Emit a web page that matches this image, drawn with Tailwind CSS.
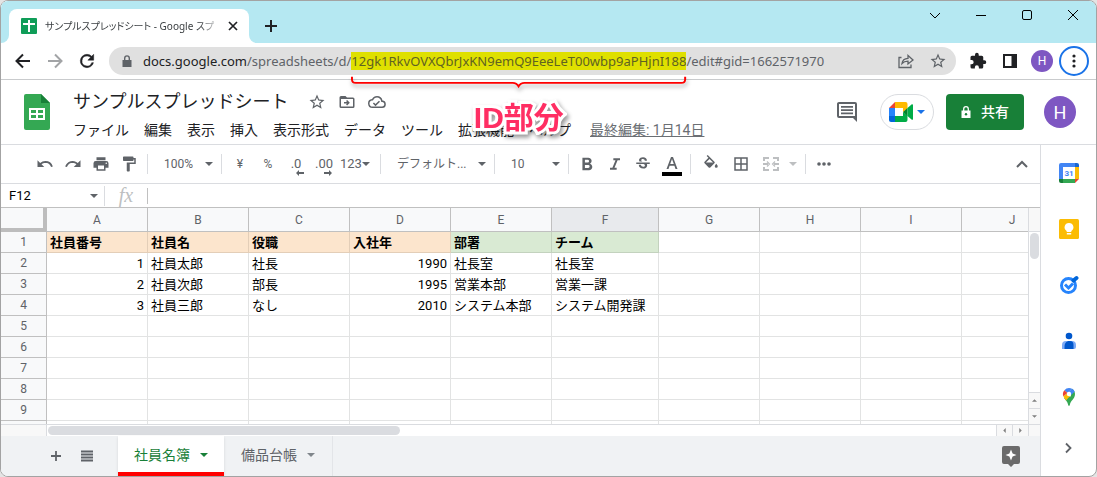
<!DOCTYPE html>
<html lang="ja">
<head>
    <meta charset="UTF-8">
    <meta name="viewport" content="width=device-width, initial-scale=1.0">
    <title>サンプルスプレッドシート - Google スプレッドシート</title>
    <script src="https://cdn.jsdelivr.net/npm/@tailwindcss/browser@4"></script>
</head>
<body class="bg-[#e4e4e4] font-['Roboto','Noto_Sans_CJK_JP',sans-serif] text-[#202124]">
    <div class="flex h-screen flex-col overflow-hidden rounded-lg border border-[#a3a3a3] bg-white">

        <!-- タブバー -->
        <div class="flex h-[42px] shrink-0 items-start bg-[#b5e8f2]">
            <div class="flex h-full w-2 shrink-0 items-end bg-white"><span class="h-full w-full rounded-br-lg bg-[#b5e8f2]"></span></div>
            <div class="flex h-full shrink-0 items-end">
                <div class="flex h-[34px] w-60 items-center rounded-t-lg bg-white pl-3 pr-2">
                    <svg class="size-4 shrink-0" viewBox="0 0 16 16"><rect width="16" height="16" rx="1" fill="#0f9d58"/><path d="M2 5h12v2H9v7H7V7H2zM7 2h2v3H7z" fill="#fff"/></svg>
                    <span class="ml-2 w-[176px] overflow-hidden whitespace-nowrap font-['Noto_Sans','Noto_Sans_CJK_JP',sans-serif] text-[10px] leading-5 text-[#3c4043] [font-feature-settings:'palt'] [mask-image:linear-gradient(to_right,black_88%,transparent)]">サンプルスプレッドシート - Google スプ</span>
                    <button class="ml-1 flex size-4 items-center justify-center" aria-label="タブを閉じる"><svg class="size-2.5" viewBox="0 0 10 10" fill="none" stroke="#202124" stroke-width="1.7"><path d="M1 1l8 8M9 1l-8 8"/></svg></button>
                </div>
            </div>
            <div class="h-full w-2 shrink-0 bg-white"><div class="h-full w-full rounded-bl-lg bg-[#b5e8f2]"></div></div>
            <button class="ml-1 mt-[15px] flex size-5 items-center justify-center" aria-label="新しいタブ"><svg class="size-3" viewBox="0 0 12 12" fill="none" stroke="#202124" stroke-width="2"><path d="M6 0v12M0 6h12"/></svg></button>
            <div class="ml-auto flex h-7">
                <button class="flex w-[46px] items-center justify-center" aria-label="タブを検索"><svg class="size-3" viewBox="0 0 12 12" fill="none" stroke="#000"><path d="M1 4l5 5 5-5"/></svg></button>
                <button class="flex w-[46px] items-center justify-center" aria-label="最小化"><svg class="size-3" viewBox="0 0 12 12" fill="none" stroke="#000"><path d="M1 6.500h10"/></svg></button>
                <button class="flex w-[46px] items-center justify-center" aria-label="最大化"><svg class="size-3" viewBox="0 0 12 12" fill="none" stroke="#000"><rect x="1.500" y="1.500" width="9" height="9" rx="1.500"/></svg></button>
                <button class="flex w-[46px] items-center justify-center" aria-label="閉じる"><svg class="size-3" viewBox="0 0 12 12" fill="none" stroke="#000"><path d="M1 1l10 10M11 1L1 11"/></svg></button>
            </div>
        </div>

        <!-- アドレスバー -->
        <div class="flex h-[37px] shrink-0 items-center border-b border-[#c9cbcd] px-1.5">
            <button class="flex w-8 justify-center" aria-label="戻る"><svg class="size-4" viewBox="0 0 16 16" fill="none" stroke="#202124" stroke-width="2"><path d="M15 8H2M8 1.500L1.500 8 8 14.500"/></svg></button>
            <button class="flex w-8 justify-center" aria-label="進む"><svg class="size-4" viewBox="0 0 16 16" fill="none" stroke="#a2a4a6" stroke-width="2"><path d="M1 8h13M8 1.500L14.500 8 8 14.500"/></svg></button>
            <button class="flex w-8 justify-center" aria-label="再読み込み"><svg class="size-5" viewBox="0 0 24 24" fill="#202124" stroke="#202124" stroke-width=".6"><path d="M17.650 6.350A7.960 7.960 0 0 0 12 4a8 8 0 1 0 7.730 10h-2.080A6 6 0 1 1 12 6c1.660 0 3.140.69 4.220 1.780L13 11h7V4z"/></svg></button>
            <div class="ml-1.5 flex h-7 min-w-0 flex-1 items-center rounded-full bg-[#e0e0e0] pl-3 pr-2">
                <svg class="size-3 shrink-0" viewBox="0 0 12 12"><path d="M1.500 5h9v7h-9z" fill="#5f6368"/><path d="M3.700 5V3.200a2.300 2.300 0 0 1 4.600 0V5" fill="none" stroke="#5f6368" stroke-width="1.400"/></svg>
                <div class="ml-2.5 flex-1 whitespace-nowrap font-['Noto_Sans',sans-serif] text-[13px] leading-[18px] text-[#5f6368]"><span class="text-[#202124]">docs.google.com</span>/spreadsheets/d/<mark class="relative inline-block bg-[#dfe000] text-[#5f6322]">12gk1RkvOVXQbrJxKN9emQ9EeeLeT00wbp9aPHjnI188<span class="absolute inset-x-0 top-6 z-10 flex flex-col items-center gap-3">
                            <svg class="h-3 w-full overflow-visible drop-shadow-[1px_3px_2px_rgba(0,0,0,0.35)]" viewBox="0 0 342 14" preserveAspectRatio="none" fill="none" stroke="#ff0000" stroke-width="2"><path d="M1 1v3q0 4 4 4h160q4 0 6 4 2-4 6-4h160q4 0 4-4V1"/></svg>
                            <span class="font-['Liberation_Sans','Noto_Sans_CJK_JP',sans-serif] text-[30px] font-bold leading-9 text-[#ff2e63] [paint-order:stroke_fill] [-webkit-text-stroke:6px_white] drop-shadow-[2px_3px_2px_rgba(0,0,0,0.4)]">ID部分</span>
                        </span></mark>/edit#gid=1662571970</div>
                <button class="flex w-8 justify-center" aria-label="共有"><svg class="size-4" viewBox="0 0 16 16" fill="none" stroke="#5f6368" stroke-width="1.300"><path d="M3.500 4.500H1v10h12v-3"/><path d="M4 10.500c.4-3.500 2.500-5 6-5.200V2.500L15 7l-5 4V8.200c-2.800 0-4.500.6-6 2.300z"/></svg></button>
                <button class="-mr-1.5 flex w-8 justify-center" aria-label="ブックマーク"><svg class="size-[18px]" viewBox="0 0 24 24" fill="#5f6368"><path d="M22 9.240l-7.190-.62L12 2 9.190 8.630 2 9.240l5.460 4.730L5.820 21 12 17.270 18.180 21l-1.630-7.030zM12 15.400l-3.760 2.270 1-4.280-3.320-2.880 4.380-.38L12 6.100l1.710 4.040 4.380.38-3.320 2.880 1 4.280z"/></svg></button>
            </div>
            <div class="ml-1.5 flex items-center">
                <button class="flex w-8 justify-center" aria-label="拡張機能"><svg class="size-[18px]" viewBox="0 0 24 24" fill="#202124"><path d="M20.500 11H19V7a2 2 0 0 0-2-2h-4V3.500a2.500 2.500 0 0 0-5 0V5H4a2 2 0 0 0-2 2v3.800h1.500a2.700 2.700 0 0 1 0 5.400H2V20a2 2 0 0 0 2 2h3.800v-1.500a2.700 2.700 0 0 1 5.400 0V22H17a2 2 0 0 0 2-2v-4h1.500a2.500 2.500 0 0 0 0-5z"/></svg></button>
                <button class="flex w-8 justify-center" aria-label="サイドパネル"><svg class="size-3.5" viewBox="0 0 14 14"><path d="M1 1h12v12H1z" fill="#fff" stroke="#202124" stroke-width="2"/><path d="M8.500 1H13v12H8.500z" fill="#202124"/></svg></button>
                <button class="flex w-8 justify-center" aria-label="プロフィール"><span class="flex size-[22px] items-center justify-center rounded-full bg-[#7e57c2] text-[12px] text-white">H</span></button>
                <button class="flex w-8 justify-center" aria-label="メニュー"><span class="flex size-[30px] items-center justify-center rounded-full border-2 border-[#1a73e8]"><svg class="h-4 w-1" viewBox="0 0 4 16" fill="#202124"><circle cx="2" cy="3" r="1.600"/><circle cx="2" cy="8" r="1.600"/><circle cx="2" cy="13" r="1.600"/></svg></span></button>
            </div>
        </div>

        <!-- ドキュメントヘッダー -->
        <header class="flex h-[65px] shrink-0 items-center border-b border-[#dadce0] pl-[23px] pr-5">
            <svg class="h-9 w-[26px] shrink-0" viewBox="0 0 26 36"><path d="M2 0h15l9 9v25a2 2 0 0 1-2 2H2a2 2 0 0 1-2-2V2a2 2 0 0 1 2-2z" fill="#34a853"/><path d="M17 0l9 9h-9z" fill="#188038"/><path d="M5 14h16v12H5zM7 16v3h5v-3zm7 0v3h5v-3zm-7 5v3h5v-3zm7 0v3h5v-3z" fill="#fff" fill-rule="evenodd"/></svg>
            <div class="ml-[23px] pt-2">
                <div class="flex h-7 items-center">
                    <h1 class="whitespace-nowrap text-[18px] leading-7">サンプルスプレッドシート</h1>
                    <button class="ml-3.5 flex w-[30px] justify-center" aria-label="スター"><svg class="size-[18px]" viewBox="0 0 24 24" fill="#5f6368"><path d="M22 9.240l-7.190-.62L12 2 9.190 8.630 2 9.240l5.460 4.730L5.820 21 12 17.270 18.180 21l-1.630-7.030zM12 15.400l-3.760 2.270 1-4.280-3.320-2.880 4.380-.38L12 6.100l1.710 4.040 4.380.38-3.320 2.880 1 4.280z"/></svg></button>
                    <button class="flex w-[30px] justify-center" aria-label="移動"><svg class="size-[18px]" viewBox="0 0 24 24" fill="#5f6368"><path d="M20 6h-8l-2-2H4a2 2 0 0 0-2 2v12a2 2 0 0 0 2 2h16a2 2 0 0 0 2-2V8a2 2 0 0 0-2-2zm0 12H4V8h16zm-7.840-1.410L15.750 13l-3.590-3.590-1.410 1.420L11.920 12H8v2h3.920l-1.170 1.170z"/></svg></button>
                    <button class="flex w-[30px] justify-center" aria-label="保存状態"><svg class="size-[18px]" viewBox="0 0 24 24" fill="#5f6368"><path d="M19.350 10.040A7.490 7.490 0 0 0 12 4a7.480 7.480 0 0 0-6.640 4.040A6 6 0 0 0 6 20h13a5 5 0 0 0 .35-9.960zM19 18H6a4 4 0 0 1-.44-7.970l1.070-.11.500-.95A5.470 5.470 0 0 1 12 6c2.620 0 4.880 1.860 5.390 4.430l.3 1.500 1.530.11A3 3 0 0 1 19 18zm-9-3.180l-2.090-2.090L6.500 14.140 10 17.640l6.010-6.010-1.410-1.410z"/></svg></button>
                </div>
                <nav class="flex h-7 items-center gap-[15px] whitespace-nowrap text-[14px]">
                    <button>ファイル</button>
                    <button>編集</button>
                    <button>表示</button>
                    <button>挿入</button>
                    <button>表示形式</button>
                    <button>データ</button>
                    <button>ツール</button>
                    <button>拡張機能</button>
                    <button>ヘルプ</button>
                    <a href="#" class="ml-1 text-[#6b6f74] underline">最終編集: 1月14日</a>
                </nav>
            </div>
            <div class="ml-auto flex items-center">
                <button aria-label="コメント"><svg class="size-6" viewBox="0 0 24 24" fill="#5f6368"><path d="M4 2h16a2 2 0 0 1 2 2v18l-4-4H4a2 2 0 0 1-2-2V4c0-1.100.9-2 2-2zm0 2v12h16V4zm2 2h12v1.800H6zm0 3.200h12V11H6zm0 3.200h12v1.800H6z" fill-rule="evenodd"/></svg></button>
                <button class="ml-[21px] flex h-9 w-[54px] items-center justify-center gap-1 rounded-full border border-[#dadce0]" aria-label="通話に参加">
                    <svg class="h-5 w-6" viewBox="0 0 24 20"><path d="M0 6h6v8H0z" fill="#2684fc"/><path d="M0 14h6v6H2a2 2 0 0 1-2-2z" fill="#0066da"/><path d="M6 0v6H0z" fill="#ea4335"/><path d="M6 0h10.500a2 2 0 0 1 2 2v4.500L14 10V6H6z" fill="#ffba00"/><path d="M6 14h8v-4l4.500 3.500V18a2 2 0 0 1-2 2H6z" fill="#00ac47"/><path d="M14 10l4.500-4v8z" fill="#00832d"/><path d="M18.500 6l4-3.500c.8-.6 1.500-.2 1.500.6v13.800c0 .8-.7 1.200-1.500.6l-4-3.500z" fill="#00ac47"/></svg>
                    <svg class="h-1 w-2" viewBox="0 0 8 4" fill="#1a73e8"><path d="M0 0h8L4 4z"/></svg>
                </button>
                <button class="ml-3 flex h-9 w-[78px] items-center justify-center gap-2.5 rounded bg-[#188038] text-[14px] font-medium text-white">
                    <svg class="h-3 w-2.5" viewBox="0 0 10 12"><path d="M.5 4.500h9V12h-9z" fill="#fff"/><path d="M2.700 5V3a2.300 2.300 0 0 1 4.600 0v2" fill="none" stroke="#fff" stroke-width="1.300"/><circle cx="5" cy="8.200" r="1.200" fill="#188038"/></svg>
                    共有
                </button>
                <button class="ml-5 flex size-8 items-center justify-center rounded-full bg-[#7e57c2] text-[18px] text-white">H</button>
            </div>
        </header>

        <div class="flex min-h-0 flex-1">
            <main class="flex min-w-0 flex-1 flex-col">

                <!-- ツールバー -->
                <div class="flex h-[39px] shrink-0 items-center border-b border-[#dadce0] pl-[30px] pr-1 text-[12px] text-[#5f6368]">
                    <button class="flex w-7 justify-center" aria-label="元に戻す"><svg class="size-[18px]" viewBox="0 0 24 24" fill="#5f6368"><path d="M12.500 8c-2.650 0-5.050.99-6.900 2.600L2 7v9h9l-3.620-3.620A8 8 0 0 1 20.100 16l2.370-.78A10.500 10.500 0 0 0 12.500 8z"/></svg></button>
                    <button class="flex w-7 justify-center" aria-label="やり直し"><svg class="size-[18px]" viewBox="0 0 24 24" fill="#5f6368"><path d="M18.400 10.600A10.500 10.500 0 0 0 1.540 15.220L3.900 16a8 8 0 0 1 12.720-3.620L13 16h9V7z"/></svg></button>
                    <button class="flex w-7 justify-center" aria-label="印刷"><svg class="size-[18px]" viewBox="0 0 24 24" fill="#5f6368"><path d="M19 8H5a3 3 0 0 0-3 3v6h4v4h12v-4h4v-6a3 3 0 0 0-3-3zm-3 11H8v-5h8zm3-7a1 1 0 1 1 0-2 1 1 0 0 1 0 2zM18 3H6v4h12z"/></svg></button>
                    <button class="flex w-7 justify-center" aria-label="書式を貼り付け"><svg class="size-[18px]" viewBox="0 0 24 24" fill="#5f6368"><path d="M18 4V3a1 1 0 0 0-1-1H5a1 1 0 0 0-1 1v4a1 1 0 0 0 1 1h12a1 1 0 0 0 1-1V6h1v4H9v11a1 1 0 0 0 1 1h2a1 1 0 0 0 1-1v-9h8V4z"/></svg></button>
                    <span class="ml-1 h-5 w-px bg-[#dadce0]"></span>
                    <div class="relative flex w-[73px] items-center">
                        <select class="w-full appearance-none pl-4 text-[#5f6368]" aria-label="ズーム"><option>100%</option></select>
                        <svg class="pointer-events-none absolute right-2 h-1 w-2" viewBox="0 0 8 4" fill="#5f6368"><path d="M0 0h8L4 4z"/></svg>
                    </div>
                    <span class="h-5 w-px bg-[#dadce0]"></span>
                    <button class="ml-1 w-7">¥</button>
                    <button class="w-7">%</button>
                    <button class="relative flex w-7 justify-center text-[13px]" aria-label="小数点以下の桁数を減らす">.0<svg class="absolute -bottom-0.5 right-1.5 h-1.5 w-2" viewBox="0 0 8 6" fill="#5f6368"><path d="M0 3l3-3v2h5v2H3v2z"/></svg></button>
                    <button class="relative flex w-7 justify-center text-[13px]" aria-label="小数点以下の桁数を増やす">.00<svg class="absolute -bottom-0.5 right-1.5 h-1.5 w-2" viewBox="0 0 8 6" fill="#5f6368"><path d="M8 3L5 0v2H0v2h5v2z"/></svg></button>
                    <button class="ml-0.5 flex w-9 items-center text-[13px]" aria-label="表示形式の詳細">123<svg class="h-1 w-2" viewBox="0 0 8 4" fill="#5f6368"><path d="M0 0h8L4 4z"/></svg></button>
                    <span class="ml-1 h-5 w-px bg-[#dadce0]"></span>
                    <div class="relative flex w-[113px] items-center">
                        <select class="w-full appearance-none pl-4 text-[#5f6368]" aria-label="フォント"><option>デフォルト...</option></select>
                        <svg class="pointer-events-none absolute right-2 h-1 w-2" viewBox="0 0 8 4" fill="#5f6368"><path d="M0 0h8L4 4z"/></svg>
                    </div>
                    <span class="h-5 w-px bg-[#dadce0]"></span>
                    <div class="relative flex w-[73px] items-center">
                        <select class="w-full appearance-none pl-4 text-[#5f6368]" aria-label="フォントサイズ"><option>10</option></select>
                        <svg class="pointer-events-none absolute right-2 h-1 w-2" viewBox="0 0 8 4" fill="#5f6368"><path d="M0 0h8L4 4z"/></svg>
                    </div>
                    <span class="h-5 w-px bg-[#dadce0]"></span>
                    <button class="ml-1 flex w-7 justify-center" aria-label="太字"><svg class="size-5" viewBox="0 0 24 24" fill="#5f6368"><path d="M15.600 11.790A4.200 4.200 0 0 0 17.600 8.500C17.600 6.120 15.850 4.500 13.500 4.500H6.500v15h7.900c2.150 0 3.950-1.750 3.950-3.950 0-1.640-1.100-3.090-2.750-3.760zM9.500 7h3.300a1.600 1.600 0 0 1 0 3.300H9.500zm3.900 9.800H9.500v-3.500h3.900a1.750 1.750 0 0 1 0 3.500z"/></svg></button>
                    <button class="flex w-7 justify-center" aria-label="斜体"><svg class="size-5" viewBox="0 0 24 24" fill="#5f6368"><path d="M10 5v2.500h2.600L8.900 16.500H6V19h8v-2.500h-2.600l3.700-9H18V5z"/></svg></button>
                    <button class="flex w-7 justify-center" aria-label="取り消し線"><svg class="size-[18px]" viewBox="0 0 24 24" fill="#5f6368"><path d="M7.240 8.750a4 4 0 0 1-.48-1.920c0-.5.100-.950.310-1.350.6-1.200 2.300-2.500 4.930-2.500 3.300 0 5.300 1.900 5.300 4.700h-2.950c0-1.400-.800-2.350-2.350-2.350-1.500 0-2.300.700-2.300 1.600 0 .900.700 1.350 1.600 1.820zM21 12v-2H3v2h9.620c1.150.45 1.960.75 1.960 1.970 0 1-.810 1.670-2.280 1.670-1.540 0-2.930-.540-2.930-2.510H6.400c0 3.300 2.400 4.950 5.900 4.950 3 0 5.250-1.400 5.250-4.140 0-.7-.120-1.330-.350-1.940z"/></svg></button>
                    <button class="ml-px flex w-7 flex-col items-center" aria-label="テキストの色"><svg class="mt-1 h-4 w-4" viewBox="0 0 16 16" fill="#5f6368"><path d="M7 1h2l4.500 12h-2l-1.100-3.200H5.600L4.500 13h-2zM6.200 8.100h3.600L8 3z"/></svg><span class="h-1 w-5 bg-black"></span></button>
                    <span class="ml-1 h-5 w-px bg-[#dadce0]"></span>
                    <button class="ml-1.5 flex w-7 justify-center" aria-label="塗りつぶしの色"><svg class="size-[18px]" viewBox="0 0 24 24" fill="#5f6368"><path d="M16.560 8.940L7.620 0 6.210 1.410l2.380 2.380-5.150 5.150a1.490 1.490 0 0 0 0 2.120l5.500 5.500a1.500 1.500 0 0 0 2.120 0l5.500-5.500a1.490 1.490 0 0 0 0-2.120zM19 11.500s-2 2.170-2 3.500a2 2 0 0 0 4 0c0-1.330-2-3.500-2-3.500zM5.210 10L10 5.210 14.790 10z" fill-rule="evenodd"/></svg></button>
                    <button class="ml-0.5 flex w-7 justify-center" aria-label="枠線"><svg class="size-[18px]" viewBox="0 0 24 24" fill="#5f6368"><path d="M3 3v18h18V3zm8 16H5v-6h6zm0-8H5V5h6zm8 8h-6v-6h6zm0-8h-6V5h6z"/></svg></button>
                    <button class="ml-0.5 flex w-7 justify-center" aria-label="セルを結合"><svg class="h-3.5 w-4" viewBox="0 0 16 14" fill="none" stroke="#bdbfc1" stroke-width="2"><path d="M1 4V1h5M10 1h5v3M1 10v3h5M10 13h5v-3M0 7h5M16 7h-5"/><path d="M4 4.500L6.500 7 4 9.500M12 4.500L9.500 7l2.500 2.500" stroke-width="1.200"/></svg></button>
                    <button class="flex w-4 justify-center" aria-label="結合の種類"><svg class="h-1 w-2" viewBox="0 0 8 4" fill="#bdbfc1"><path d="M0 0h8L4 4z"/></svg></button>
                    <span class="ml-1 h-5 w-px bg-[#dadce0]"></span>
                    <button class="ml-1 flex w-7 justify-center" aria-label="もっと見る"><svg class="h-1 w-3.5" viewBox="0 0 14 4" fill="#5f6368"><circle cx="2" cy="2" r="1.800"/><circle cx="7" cy="2" r="1.800"/><circle cx="12" cy="2" r="1.800"/></svg></button>
                    <button class="ml-auto flex w-7 justify-center" aria-label="メニューを非表示"><svg class="size-3" viewBox="0 0 12 12" fill="none" stroke="#5f6368" stroke-width="2"><path d="M1 9l5-5 5 5"/></svg></button>
                </div>

                <!-- 数式バー -->
                <div class="flex h-6 shrink-0 items-center border-b border-[#c0c0c0]">
                    <div class="relative flex w-[103px] items-center">
                        <input class="w-full pl-2 text-[13px] text-black" aria-label="名前ボックス" value="F12">
                        <svg class="pointer-events-none absolute right-1.5 h-1 w-2" viewBox="0 0 8 4" fill="#5f6368"><path d="M0 0h8L4 4z"/></svg>
                    </div>
                    <span class="h-5 w-px bg-[#dadce0]"></span>
                    <label for="formula" class="w-[42px] pb-0.5 text-center font-['Liberation_Serif',serif] text-[20px] italic leading-5 text-[#bdbfc1]">fx</label>
                    <span class="h-4 w-px bg-[#c0c0c0]"></span>
                    <input id="formula" class="h-5 min-w-0 flex-1 px-2 text-[13px]">
                </div>

                <!-- シート -->
                <div class="flex min-h-0 flex-1">
                    <div class="min-w-0 flex-1 overflow-hidden">
                        <table class="w-[1062px] table-fixed border-separate border-spacing-0">
                            <colgroup>
                                <col class="w-[46px]">
                                <col class="w-[101px]"><col class="w-[101px]"><col class="w-[101px]"><col class="w-[101px]"><col class="w-[101px]">
                                <col class="w-[107px]">
                                <col class="w-[101px]"><col class="w-[101px]"><col class="w-[101px]"><col class="w-[101px]">
                            </colgroup>
                            <thead><tr id="columns"></tr></thead>
                            <tbody id="rows"></tbody>
                        </table>
                    </div>
                    <div class="flex w-3 shrink-0 flex-col border-l border-[#dadce0]">
                        <div class="h-6 border-b border-[#dadce0] bg-[#f8f8f8]"></div>
                        <div class="flex flex-1 justify-center pt-px"><span class="h-[26px] w-[9px] rounded-full bg-[#dadce0]"></span></div>
                        <button class="flex h-4 items-center justify-center border-t border-[#dadce0] bg-[#f8f8f8]" aria-label="上へ"><svg class="h-[3px] w-[5px]" viewBox="0 0 6 3" fill="#808080"><path d="M0 3h6L3 0z"/></svg></button>
                        <button class="flex h-4 items-center justify-center border-t border-[#dadce0] bg-[#f8f8f8]" aria-label="下へ"><svg class="h-[3px] w-[5px]" viewBox="0 0 6 3" fill="#808080"><path d="M0 0h6L3 3z"/></svg></button>
                    </div>
                </div>
                <div class="flex h-3 shrink-0 border-t border-[#dadce0]">
                    <div class="w-[46px] border-r border-[#dadce0] bg-[#f8f8f8]"></div>
                    <div class="flex flex-1 items-center pl-px"><span class="h-[9px] w-[352px] rounded-full bg-[#dadce0]"></span></div>
                    <button class="flex w-4 items-center justify-center border-l border-[#dadce0] bg-[#f8f8f8]" aria-label="左へ"><svg class="h-[5px] w-[3px]" viewBox="0 0 3 6" fill="#808080"><path d="M3 0v6L0 3z"/></svg></button>
                    <button class="flex w-4 items-center justify-center border-l border-[#dadce0] bg-[#f8f8f8]" aria-label="右へ"><svg class="h-[5px] w-[3px]" viewBox="0 0 3 6" fill="#808080"><path d="M0 0v6l3-3z"/></svg></button>
                    <div class="w-3 border-l border-[#dadce0] bg-[#f8f8f8]"></div>
                </div>

                <!-- シートタブ -->
                <div class="flex h-10 shrink-0 items-center bg-[#f0f2f4] pl-[39px] pr-5 text-[14px]">
                    <button class="flex w-[31px] justify-center" aria-label="シートを追加"><svg class="size-2.5" viewBox="0 0 10 10" fill="none" stroke="#5f6368" stroke-width="1.800"><path d="M5 0v10M0 5h10"/></svg></button>
                    <button class="flex w-[31px] justify-center" aria-label="すべてのシート"><svg class="size-3" viewBox="0 0 12 12" fill="#5f6368"><path d="M0 .5h12v2H0zM0 3.500h12v2H0zM0 6.500h12v2H0zM0 9.500h12v2H0z"/></svg></button>
                    <button class="ml-4 flex h-full w-[106px] items-center justify-center gap-2.5 border-b-4 border-[#ff0000] bg-white pt-0.5 text-[#188038] shadow">社員名簿<svg class="h-1 w-2" viewBox="0 0 8 4" fill="#188038"><path d="M0 0h8L4 4z"/></svg></button>
                    <button class="flex h-full w-[109px] items-center justify-center gap-2.5 border-r border-[#e3e5e8] pb-0.5 text-[#5f6368]">備品台帳<svg class="h-1 w-2" viewBox="0 0 8 4" fill="#80868b"><path d="M0 0h8L4 4z"/></svg></button>
                    <button class="ml-auto" aria-label="データ探索"><svg class="h-[21px] w-[18px]" viewBox="0 0 18 21"><path d="M2 0h14a2 2 0 0 1 2 2v14a2 2 0 0 1-2 2h-4l-3 3-3-3H2a2 2 0 0 1-2-2V2a2 2 0 0 1 2-2z" fill="#6b6b6b"/><path d="M9 3.500l1.600 4L14.500 9l-3.900 1.600L9 14.500l-1.600-3.900L3.500 9l3.900-1.500z" fill="#fff"/></svg></button>
                </div>
            </main>

            <!-- サイドパネル -->
            <aside class="flex w-14 shrink-0 flex-col items-center border-l border-[#dadce0] pt-[18px]">
                <button class="mb-9" aria-label="カレンダー"><svg class="size-5" viewBox="0 0 20 20"><path d="M2 0h14v4H4v12H0V2a2 2 0 0 1 2-2z" fill="#4285f4"/><path d="M16 0h2a2 2 0 0 1 2 2v2h-4z" fill="#1967d2"/><path d="M16 4h4v12h-4z" fill="#fbbc04"/><path d="M4 16h12v4H4z" fill="#34a853"/><path d="M0 16h4v4H2a2 2 0 0 1-2-2z" fill="#188038"/><path d="M16 16h4l-4 4z" fill="#ea4335"/><path d="M4 4h12v12H4z" fill="#fff"/><text x="10" y="13" text-anchor="middle" font-size="8" font-weight="700" fill="#4285f4">31</text></svg></button>
                <button class="mb-9" aria-label="Keep"><svg class="size-5" viewBox="0 0 20 20"><rect width="20" height="20" rx="1.500" fill="#fbbc04"/><path d="M10 4a4.300 4.300 0 0 0-2.300 8v1h4.600v-1A4.300 4.300 0 0 0 10 4zM7.800 14h4.400v1.500H7.800z" fill="#fff"/></svg></button>
                <button class="mb-9" aria-label="ToDo リスト"><svg class="size-5" viewBox="0 0 20 20" fill="none"><circle cx="9.500" cy="10.500" r="7" stroke="#2684fc" stroke-width="3"/><path d="M6 9.500l3.500 3.500L14 8.500" stroke="#2684fc" stroke-width="3"/><path d="M14.500 5.500L17.500 3" stroke="#0066da" stroke-width="4" stroke-linecap="round"/></svg></button>
                <button class="mb-9" aria-label="連絡先"><svg class="size-5" viewBox="0 0 20 20"><circle cx="10" cy="5" r="3.300" fill="#0057cc"/><path d="M3 18v-4a4 4 0 0 1 4-4h6a4 4 0 0 1 4 4v2a2 2 0 0 1-2 2z" fill="#7baaf7"/><path d="M5.500 18v-2c0-3.500 1.500-6 5-6h.5c2.500 0 3.500 1.600 3.500 4v4z" fill="#0057cc"/></svg></button>
                <button aria-label="マップ"><svg class="size-5" viewBox="0 0 20 20"><path d="M10 1a6 6 0 0 0-4.600 2.200L8.500 6 13 1.800A6 6 0 0 0 10 1z" fill="#4285f4"/><path d="M5.400 3.200a6 6 0 0 0-.9 6.400L8.500 6z" fill="#ea4335"/><path d="M12 9.200L5 11c1.500 2.300 3.600 3.600 4.200 7q.8 2 1.600 0c.7-4.500 5.200-6 5.200-11 0-2-1.200-4.300-3-5.200L11 5z" fill="#34a853"/><path d="M4.500 9.600c.6 1.500 1.500 2.500 2.500 3.800L11.500 8.500 8.500 6z" fill="#fbbc04"/><path d="M8.500 6L13 1.800c1.300.7 2.200 1.700 2.600 3L12 8z" fill="#4285f4"/><circle cx="10" cy="7" r="2.200" fill="#fff"/></svg></button>
                <button class="mb-[22px] mt-auto" aria-label="サイドパネルを非表示"><svg class="size-3" viewBox="0 0 12 12" fill="none" stroke="#5f6368" stroke-width="1.800"><path d="M3 1.500L7.500 6 3 10.500"/></svg></button>
            </aside>
        </div>
    </div>

    <script>
        const columns = ['A', 'B', 'C', 'D', 'E', 'F', 'G', 'H', 'I', 'J'];
        const sheet = [
            ['社員番号', '社員名', '役職', '入社年', '部署', 'チーム'],
            [1, '社員太郎', '社長', 1990, '社長室', '社長室'],
            [2, '社員次郎', '部長', 1995, '営業本部', '営業一課'],
            [3, '社員三郎', 'なし', 2010, 'システム本部', 'システム開発課'],
        ];

        document.getElementById('columns').innerHTML =
            '<td class="h-6 border-b-4 border-r-4 border-[#bdbdbd] bg-[#f8f9fa] p-0"></td>' +
            columns.map(c => `<th class="h-6 border-b border-r border-[#c0c0c0] p-0 text-[12px] font-normal leading-4 text-[#5f6368] ${c === 'F' ? 'bg-[#e8eaed]' : 'bg-[#f8f9fa]'}">${c}</th>`).join('');

        function cellStyle(r, c) {
            if (r === 0 && c < 4) return 'bg-[#fce5cd] border-[#e3ceb8] font-bold';
            if (r === 0 && c < 6) return 'bg-[#d9ead3] border-[#c3d2be] font-bold';
            return 'border-[#e2e3e3]';
        }

        let html = '';
        for (let r = 0; r < 10; r++) {
            html += `<tr><th class="h-[21px] border-b border-r border-[#c0c0c0] bg-[#f8f9fa] p-0 text-[12px] font-normal leading-4 text-[#5f6368]">${r < 9 ? r + 1 : ''}</th>`;
            for (let c = 0; c < columns.length; c++) {
                const value = (sheet[r] || [])[c] ?? '';
                const align = typeof value === 'number' ? 'text-right' : 'text-left';
                html += `<td class="h-[21px] whitespace-nowrap border-b border-r px-[3px] pb-0 pt-0.5 text-[13px] leading-4 text-black ${align} ${cellStyle(r, c)}">${value}</td>`;
            }
            html += '</tr>';
        }
        document.getElementById('rows').innerHTML = html;
    </script>
</body>
</html>
